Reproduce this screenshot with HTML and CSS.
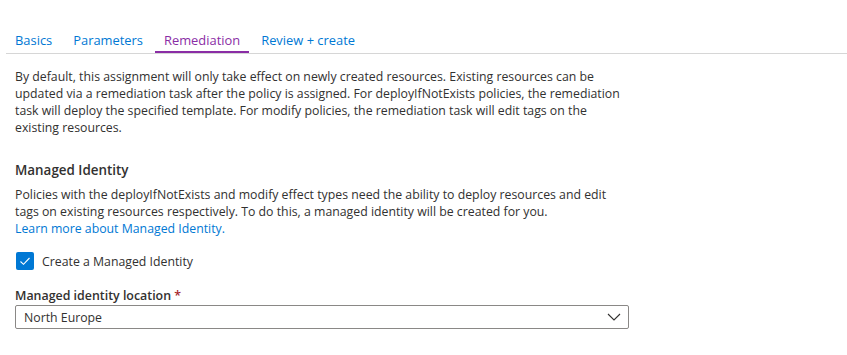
FILE: index.html
```html
<!DOCTYPE html>
<html lang="en">
<head>
<meta charset="utf-8">
<title>Assign policy - Remediation</title>
<link rel="stylesheet" href="styles.css">
</head>
<body>
<div class="page">
  <nav class="tabs">
    <a class="tab">Basics</a>
    <a class="tab">Parameters</a>
    <a class="tab active">Remediation</a>
    <a class="tab">Review + create</a>
  </nav>
  <div class="content">
    <p class="intro">By default, this assignment will only take effect on newly created resources. Existing resources can be<br>updated via a remediation task after the policy is assigned. For deployIfNotExists policies, the remediation<br>task will deploy the specified template. For modify policies, the remediation task will edit tags on the<br>existing resources.</p>
    <h2 class="section-title">Managed Identity</h2>
    <p class="desc">Policies with the deployIfNotExists and modify effect types need the ability to deploy resources and edit<br>tags on existing resources respectively. To do this, a managed identity will be created for you.<br><a class="link">Learn more about Managed Identity.</a></p>
    <label class="check">
      <span class="box"><svg viewBox="0 0 18 18" width="18" height="18"><path d="M4.5 9.5 L7.5 12.3 L13.5 6" fill="none" stroke="#fff" stroke-width="1.1"/></svg></span>
      <span class="check-label">Create a Managed Identity</span>
    </label>
    <div class="field">
      <div class="field-label">Managed identity location <span class="req">*</span></div>
      <div class="select">
        <span class="select-value">North Europe</span>
        <svg class="chev" viewBox="0 0 14 8" width="14" height="8"><path d="M1 1 L7 7 L13 1" fill="none" stroke="#323130" stroke-width="1.1"/></svg>
      </div>
    </div>
  </div>
</div>
</body>
</html>
```
FILE: styles.css
```css
* { box-sizing: border-box; }
html, body { margin: 0; padding: 0; background: #fff; }
body {
  font-family: "Segoe UI", "Open Sans", "Noto Sans", sans-serif;
  font-size: 12.3px;
  color: #323130;
}
.page { padding-top: 28px; }
.tabs {
  display: flex;
  margin-left: 6px;
  border-bottom: 1px solid #d6d6d6;
  height: 26px;
}
.tab {
  display: block;
  padding: 0 9px 0 9px;
  margin-right: 3px;
  color: #0078d4;
  font-size: 12.9px;
  line-height: 24px;
  border-bottom: 2px solid transparent;
  height: 25px;
}
.tab.active { color: #8a2da5; border-bottom-color: #8a2da5; }
.content { padding: 0 15px; }
.intro { margin: 14px 0 0; line-height: 17px; }
.section-title { margin: 24px 0 0; font-size: 13.4px; font-weight: 600; line-height: 20px; }
.desc { margin: 6px 0 0; line-height: 17px; }
.link { color: #0078d4; }
.check { display: flex; align-items: center; margin-top: 15px; height: 18px; }
.box { width: 18px; height: 18px; background: #0078d4; border-radius: 2px; margin-left: 1px; display: flex; }
.check-label { margin-left: 8px; }
.field { margin-top: 17px; width: 614px; }
.field-label { font-weight: 600; font-size: 12.4px; line-height: 18px; }
.req { color: #a4262c; }
.select {
  margin-top: 0;
  height: 24px;
  border: 1px solid #8a8886;
  border-radius: 2px;
  display: flex;
  align-items: center;
  justify-content: space-between;
  padding: 0 7px 0 8px;
}
.chev { display: block; }
```
